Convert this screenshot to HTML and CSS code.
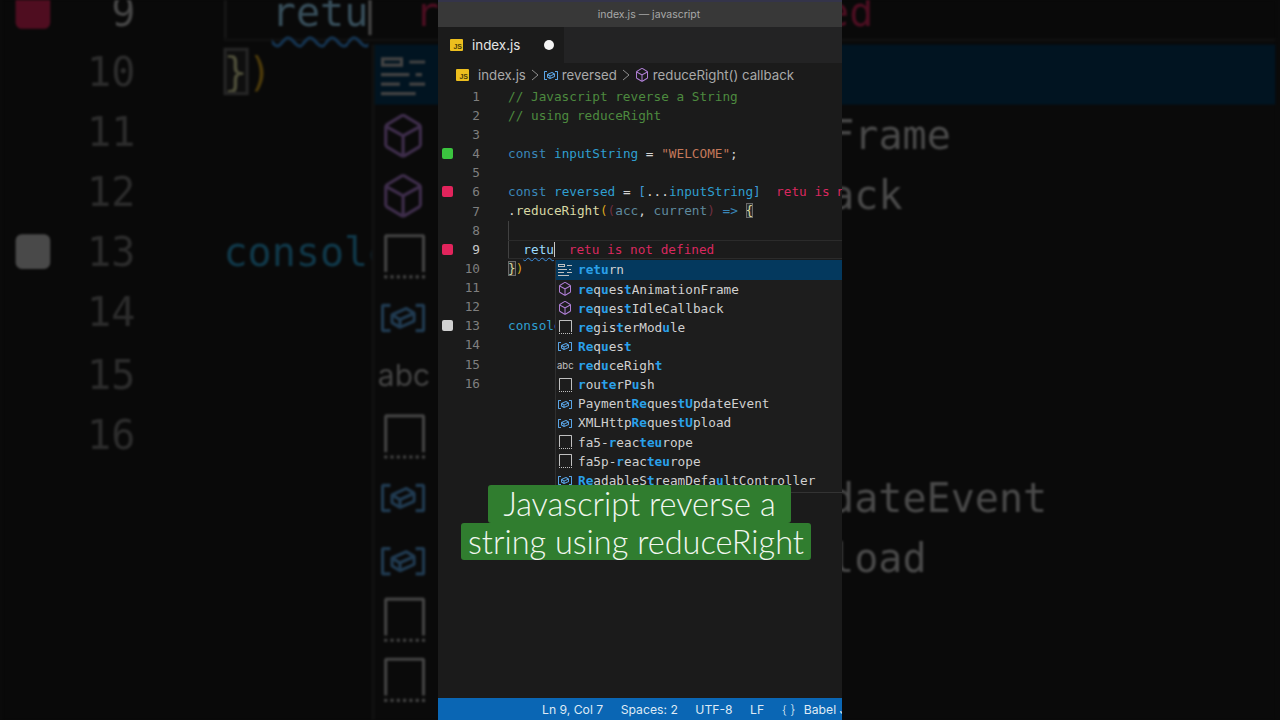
FILE: index.html
```html
<!DOCTYPE html>
<html lang="en">
<head>
    <meta charset="UTF-8">
    <meta name="viewport" content="width=device-width, initial-scale=1.0">
    <title>index.js - javascript</title>
    <link rel="stylesheet" href="styles.css">
</head>
<body>
    <!-- icon sprite, shared by the window and its blown-up copy -->
    <svg class="sprite" xmlns="http://www.w3.org/2000/svg">
        <symbol id="i-method" viewBox="0 0 16 16"><path d="M13.51 4l-5-3h-1l-5 3-.49.86v6l.49.85 5 3h1l5-3 .49-.85v-6L13.51 4zm-6 9.56l-4.5-2.7V5.7l4.5 2.45v5.41zM3.27 4.7l4.74-2.84 4.74 2.84-4.74 2.59L3.27 4.7zm9.74 6.16l-4.5 2.7V8.15l4.5-2.45v5.16z"/></symbol>
        <symbol id="i-variable" viewBox="0 0 16 16"><path d="M2 5h2V4H1.5l-.5.5v8l.5.5H4v-1H2V5zm12.5-1H12v1h2v7h-2v1h2.5l.5-.5v-8l-.5-.5zm-2.74 2.57L12 7v2.51l-.3.45-4.5 2-.46-.05-2.5-1.5-.24-.43v-2.5l.3-.46 4.5-2h.46l2.5 1.5zM5 9.71l1.5.9V9.28L5 8.38v1.33zm.58-2.15l1.45.87 3.39-1.5-1.45-.87-3.39 1.5zm1.95 3.17l3.5-1.56v-1.4l-3.5 1.55v1.41z"/></symbol>
        <symbol id="i-snippet" viewBox="0 0 16 16"><path d="M2.5 1L2 1.5V13H3V2H14V13H15V1.5L14.5 1H2.5ZM2 15V14H3V15H2ZM5 14H4V15H5V14ZM6 14H7V15H6V14ZM9 14H8V15H9V14ZM10 14H11V15H10V14ZM15 15V14H14V15H15ZM12 14H13V15H12V14Z"/></symbol>
        <symbol id="i-keyword" viewBox="0 0 16 16"><path d="M15 4h-5V3h5v1zm-1 3h-2v1h2V7zm-4 0H1v1h9V7zm2 6H1v1h11v-1zm-5-3H1v1h6v-1zm8 0h-5v1h5v-1zM8 2v3H1V2h7zM7 3H2v1h5V3z"/></symbol>
        <symbol id="i-chevron" viewBox="0 0 8 12"><path d="M1 1l6 5-6 5" fill="none" stroke="#8f8f8f" stroke-width="1"/></symbol>
    </svg>

    <div class="stage">
        <div class="backdrop" id="backdrop" aria-hidden="true"></div>

        <div class="window" id="window">
            <div class="titlebar">index.js — javascript</div>

            <div class="tabs">
                <div class="tab">
                    <span class="js-icon">JS</span>
                    <span class="tab-name">index.js</span>
                    <span class="dirty-dot"></span>
                </div>
            </div>

            <div class="crumbs">
                <span class="js-icon">JS</span>
                <span>index.js</span>
                <svg class="chev"><use href="#i-chevron"/></svg>
                <svg class="crumb-icon blue"><use href="#i-variable"/></svg>
                <span>reversed</span>
                <svg class="chev"><use href="#i-chevron"/></svg>
                <svg class="crumb-icon purple"><use href="#i-method"/></svg>
                <span>reduceRight() callback</span>
            </div>

            <div class="editor">
                <div class="line"><i></i><b>1</b><code class="cm">// Javascript reverse a String</code></div>
                <div class="line"><i></i><b>2</b><code class="cm">// using reduceRight</code></div>
                <div class="line"><i></i><b>3</b><code></code></div>
                <div class="line"><i class="ok"></i><b>4</b><code><span class="kw">const</span> <span class="cn">inputString</span> = <span class="str">"WELCOME"</span>;</code></div>
                <div class="line"><i></i><b>5</b><code></code></div>
                <div class="line"><i class="bad"></i><b>6</b><code><span class="kw">const</span> <span class="cn">reversed</span> = <span class="br">[</span>...<span class="cn">inputString</span><span class="br">]</span><span class="err">retu is not defined</span></code></div>
                <div class="line"><i></i><b>7</b><code>.<span class="fn">reduceRight</span><span class="gold">(</span><span class="dimred">(</span><span class="arg">acc</span>, <span class="arg">current</span><span class="dimred">)</span> <span class="kw">=&gt;</span> <span class="gold match">{</span></code></div>
                <div class="line"><i></i><b>8</b><code class="guide"></code></div>
                <div class="line active"><i class="bad"></i><b>9</b><code class="guide">  <span class="retu">retu</span><span class="err">retu is not defined</span></code></div>
                <div class="line"><i></i><b>10</b><code><span class="gold match">}</span><span class="gold">)</span></code></div>
                <div class="line"><i></i><b>11</b><code></code></div>
                <div class="line"><i></i><b>12</b><code></code></div>
                <div class="line"><i class="info"></i><b>13</b><code><span class="cn">console</span>.<span class="fn">log</span><span class="gold">(</span><span class="var">reversed</span><span class="gold">)</span>;</code></div>
                <div class="line"><i></i><b>14</b><code></code></div>
                <div class="line"><i></i><b>15</b><code></code></div>
                <div class="line"><i></i><b>16</b><code></code></div>
            </div>

            <div class="suggest">
                <div class="row selected"><svg class="kind grey"><use href="#i-keyword"/></svg><span><em>retu</em>rn</span></div>
                <div class="row"><svg class="kind purple"><use href="#i-method"/></svg><span><em>re</em>q<em>u</em>es<em>t</em>AnimationFrame</span></div>
                <div class="row"><svg class="kind purple"><use href="#i-method"/></svg><span><em>re</em>q<em>u</em>es<em>t</em>IdleCallback</span></div>
                <div class="row"><svg class="kind grey"><use href="#i-snippet"/></svg><span><em>re</em>gis<em>t</em>erMod<em>u</em>le</span></div>
                <div class="row"><svg class="kind blue"><use href="#i-variable"/></svg><span><em>Re</em>q<em>u</em>es<em>t</em></span></div>
                <div class="row"><span class="kind abc">abc</span><span><em>re</em>d<em>u</em>ceRigh<em>t</em></span></div>
                <div class="row"><svg class="kind grey"><use href="#i-snippet"/></svg><span><em>r</em>ou<em>te</em>rP<em>u</em>sh</span></div>
                <div class="row"><svg class="kind blue"><use href="#i-variable"/></svg><span>Payment<em>Re</em>ques<em>tU</em>pdateEvent</span></div>
                <div class="row"><svg class="kind blue"><use href="#i-variable"/></svg><span>XMLHttp<em>Re</em>ques<em>tU</em>pload</span></div>
                <div class="row"><svg class="kind grey"><use href="#i-snippet"/></svg><span>fa5-<em>r</em>eac<em>teu</em>rope</span></div>
                <div class="row"><svg class="kind grey"><use href="#i-snippet"/></svg><span>fa5p-<em>r</em>eac<em>teu</em>rope</span></div>
                <div class="row"><svg class="kind blue"><use href="#i-variable"/></svg><span><em>Re</em>adableS<em>t</em>reamDefa<em>u</em>ltController</span></div>
            </div>

            <div class="statusbar">
                <span>Ln 9, Col 7</span>
                <span>Spaces: 2</span>
                <span>UTF-8</span>
                <span>LF</span>
                <span class="braces">{ }</span>
                <span>Babel JavaScript</span>
            </div>
        </div>

        <div class="caption">
            <span class="caption-line first">Javascript reverse a</span>
            <span class="caption-line">string using reduceRight</span>
        </div>
    </div>

    <script>
        // The sides of the video are the same window blown up and dimmed
        const copy = document.getElementById('window').cloneNode(true);
        copy.removeAttribute('id');
        document.getElementById('backdrop').appendChild(copy);
    </script>
</body>
</html>
```

FILE: styles.css
```css
* {
    box-sizing: border-box;
}

body {
    margin: 0;
    background-color: #0a0a0a;
    font-family: "Inter", "Liberation Sans", sans-serif;
}

.sprite {
    display: none;
}

.stage {
    position: relative;
    width: 1280px;
    height: 720px;
    overflow: hidden;
    display: flex;
    justify-content: center;
}

/* blown-up copy behind the window */
.backdrop {
    position: absolute;
    inset: 0;
    overflow: hidden;
    filter: brightness(0.35) blur(1px);
}

.backdrop .window {
    position: absolute;
    left: 3px;
    top: -777px;
    transform-origin: 0 0;
    transform: scale(3.15, 3.16);
}

.backdrop .suggest {
    padding-top: 0;
}

.window {
    position: relative;
    flex: none;
    width: 404px;
    height: 720px;
    overflow: hidden;
    background-color: #1b1b1b;
    color: #cccccc;
    display: flex;
    flex-direction: column;
}

.titlebar {
    height: 27px;
    flex: none;
    background-color: #383838;
    border-top: 2px solid #34344a;
    color: #a8a8a8;
    font-size: 10.5px;
    line-height: 25px;
    text-align: center;
    padding-left: 18px;
}

.tabs {
    height: 36px;
    flex: none;
    background-color: #232324;
    display: flex;
}

.tab {
    width: 126px;
    background-color: #1b1b1b;
    display: flex;
    align-items: center;
    padding-left: 12px;
    font-size: 13.4px;
    color: #e4e4e4;
}

.tab-name {
    margin-left: 9px;
}

.dirty-dot {
    width: 10px;
    height: 10px;
    border-radius: 50%;
    background-color: #f5f5f5;
    margin-left: 24px;
}

.js-icon {
    flex: none;
    width: 13px;
    height: 12px;
    border-radius: 1px;
    background-color: #ecbe1e;
    color: #4a3c08;
    font-family: "Liberation Sans", sans-serif;
    font-size: 7px;
    font-weight: 700;
    line-height: 15px;
    text-align: right;
    padding-right: 1px;
    overflow: hidden;
}

.crumbs {
    height: 23.7px;
    flex: none;
    display: flex;
    align-items: center;
    padding-left: 18px;
    font-size: 13.25px;
    color: #a9a9a9;
    white-space: nowrap;
}

.crumbs .js-icon {
    margin-right: 9px;
}

.chev {
    flex: none;
    width: 8px;
    height: 12px;
    margin: 0 4px 0 5px;
}

.crumb-icon {
    width: 16px;
    height: 16px;
    flex: none;
    margin-right: 3px;
}

.blue {
    fill: #5aa5e6;
}

.purple {
    fill: #b180d7;
}

.grey {
    fill: #c0c0c0;
}

.editor {
    flex: 1;
    font-family: "DejaVu Sans Mono", monospace;
    font-size: 12.73px;
    color: #d4d4d4;
}

.line {
    display: flex;
    align-items: center;
    height: 19.13px;
    white-space: pre;
}

/* breakpoint-style marker in the gutter */
.line i {
    flex: none;
    width: 11px;
    height: 11px;
    margin-left: 4px;
    border-radius: 2px;
}

.line .ok {
    background-color: #3bc43f;
}

.line .bad {
    background-color: #e2245c;
}

.line .info {
    background-color: #d0d0d0;
}

.line b {
    flex: none;
    width: 27px;
    font-weight: normal;
    text-align: right;
    color: #7f7f7f;
}

.line code {
    flex: 1;
    height: 100%;
    margin-left: 28px;
    font: inherit;
    line-height: 19.13px;
}

.line .guide {
    box-shadow: inset 1px 0 #414141;
}

.active b {
    color: #c8c8c8;
}

.active code {
    border-top: 1px solid #2b2b2b;
    border-bottom: 1px solid #2b2b2b;
    line-height: 17.13px;
}

.cm {
    color: #4d8a3f;
}

.kw {
    color: #3a86b8;
}

.cn {
    color: #2f9fd0;
}

.var {
    color: #9cdcfe;
}

.str {
    color: #c4785a;
}

.fn {
    color: #d8d8a4;
}

.br {
    color: #3f9ad6;
}

.gold {
    color: #d9a51c;
}

.dimred {
    color: #6e2f40;
}

.arg {
    color: #5f8a9e;
}

.match {
    color: #d8d8a0;
    background-color: #2c2c2c;
    outline: 1px solid #6a6a6a;
    outline-offset: -1px;
}

.err {
    margin-left: 2ch;
    color: #d9285f;
}

.retu {
    color: #9cdcfe;
    text-decoration: underline wavy #3a8fe0 1px;
    text-underline-offset: 3px;
    border-right: 1.5px solid #c8c8c8;
    margin-right: -1.5px;
}

/* suggestion widget lies over the editor */
.suggest {
    position: absolute;
    left: 117px;
    top: 260px;
    width: 287px;
    height: 233px;
    padding-top: 0.4px;
    background-color: #1d1d1d;
    border-left: 1px solid #303030;
    border-bottom: 1px solid #333333;
    font-family: "DejaVu Sans Mono", monospace;
    font-size: 12.73px;
    color: #d0d0d0;
    white-space: nowrap;
}

.row {
    display: flex;
    align-items: center;
    height: 19.13px;
}

.selected {
    background-color: #04395e;
}

.kind {
    flex: none;
    width: 16px;
    height: 16px;
    margin: 0 5px 0 1px;
}

.abc {
    font-family: "Inter", sans-serif;
    font-size: 9.5px;
    line-height: 16px;
    text-align: center;
    color: #c0c0c0;
}

.row em {
    font-style: normal;
    font-weight: 700;
    color: #2aa1ea;
}

.statusbar {
    height: 22px;
    flex: none;
    background-color: #0a66b4;
    color: #dfeaf5;
    font-size: 12.2px;
    display: flex;
    align-items: center;
    gap: 17.5px;
    padding: 1px 0 0 104px;
    white-space: nowrap;
}

.braces {
    font-weight: 300;
    margin: 0 -9px 0 0;
}

.caption {
    position: absolute;
    left: 0;
    right: 8px;
    top: 485px;
    display: flex;
    flex-direction: column;
    align-items: center;
    font-family: "Lato", sans-serif;
    font-weight: 300;
    font-size: 32.5px;
    color: #f2f7f0;
}

.caption-line {
    height: 37.5px;
    line-height: 37px;
    padding: 0 7px;
    background-color: #307d2f;
    border-radius: 3px;
}

.first {
    padding: 0 15px;
    margin-left: 7px;
}
```
